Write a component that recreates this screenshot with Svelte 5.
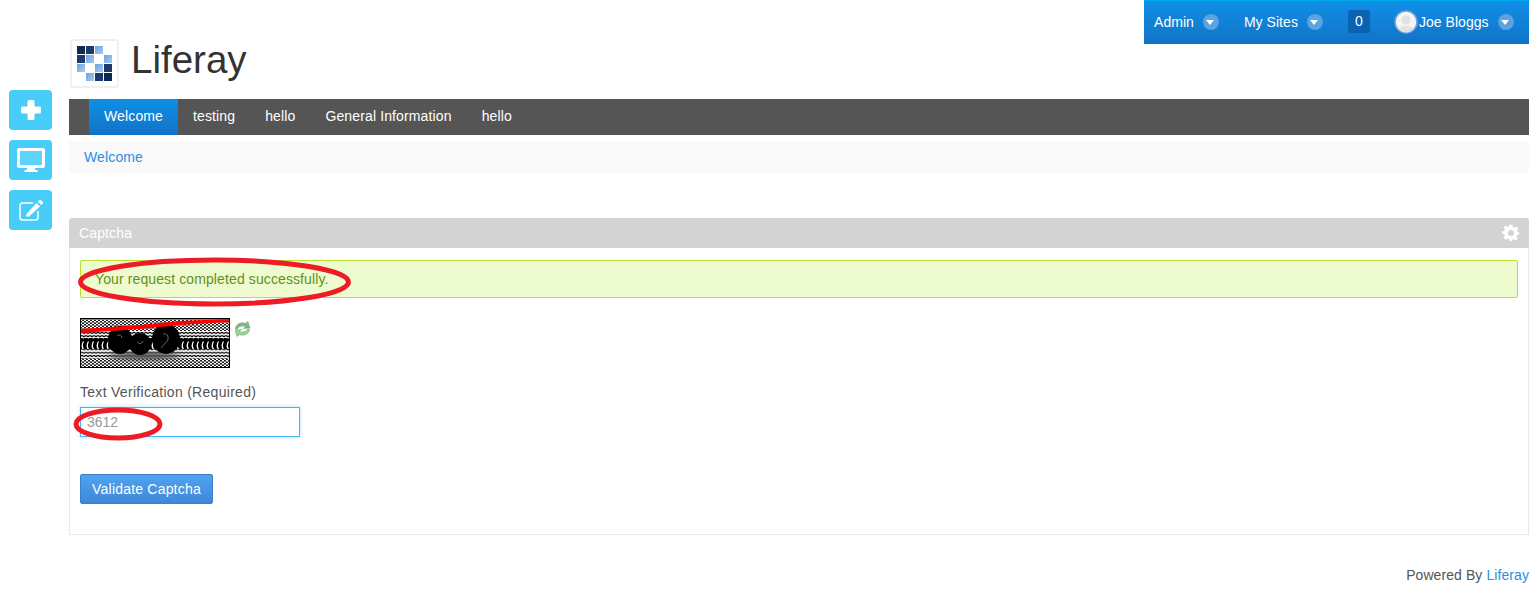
<script>
	const navItems = [
		{ label: 'Welcome', active: true },
		{ label: 'testing' },
		{ label: 'hello' },
		{ label: 'General Information' },
		{ label: 'hello' }
	];
	const light = 'linear-gradient(135deg,#6aa5de,#a9cbee)';
	const logoCells = [
		['#0c2a52', '#1c3a6e', light, null],
		['#1c3a6e', light, null, light],
		[light, null, light, '#1c3a6e'],
		[null, light, '#1c3a6e', '#0c2a52']
	];
</script>

<div class="page">
	<div class="dockbar">
		<span class="dock-item">Admin <i class="caret"></i></span>
		<span class="dock-item sites">My Sites <i class="caret"></i></span>
		<span class="badge">0</span>
		<span class="dock-item user">
			<svg class="avatar" viewBox="0 0 24 24" width="24" height="24">
				<circle cx="12" cy="12" r="11" fill="#f4f4f4" stroke="#6f9fe0" stroke-width="1.5" />
				<circle cx="12" cy="10" r="4.5" fill="#e2e2e2" />
				<path d="M4.5 19c2-4 13-4 15 0a10 10 0 0 1-15 0z" fill="#e2e2e2" />
			</svg><span>Joe Bloggs</span><i class="caret last"></i>
		</span>
	</div>

	<aside class="side">
		<button class="side-btn" aria-label="Add">
			<svg viewBox="0 0 24 24" width="24" height="24"><path d="M8.500 3.500a1.500 1.500 0 0 1 1.500-1.500h4a1.500 1.500 0 0 1 1.500 1.500v5h5a1.500 1.500 0 0 1 1.500 1.500v4a1.500 1.500 0 0 1-1.500 1.500h-5v5a1.500 1.500 0 0 1-1.500 1.500h-4a1.500 1.500 0 0 1-1.500-1.500v-5h-5A1.500 1.500 0 0 1 2 14v-4a1.500 1.500 0 0 1 1.500-1.500h5z" fill="#fff" /></svg>
		</button>
		<button class="side-btn" aria-label="Preview">
			<svg viewBox="0 0 28 24" width="28" height="24"><path fill="#fff" fill-rule="evenodd" d="M2 0h24a2 2 0 0 1 2 2v16a2 2 0 0 1-2 2H18v2h2.500v2h-13v-2H10v-2H2a2 2 0 0 1-2-2V2a2 2 0 0 1 2-2zm1 3v14h22V3z" /><rect x="3" y="3" width="22" height="14" fill="#fff" opacity="0.12" /></svg>
		</button>
		<button class="side-btn" aria-label="Edit">
			<svg viewBox="0 0 26 24" width="26" height="24">
				<path d="M20 13v6.500a2.500 2.500 0 0 1-2.500 2.500h-13A2.500 2.500 0 0 1 2 19.500v-12A2.500 2.500 0 0 1 4.500 5H15" fill="none" stroke="#fff" stroke-width="1.500" />
				<path d="M8.500 16 18.500 5l3.500 3.500L11 18.500H8z" fill="#fff" />
				<path d="M19.700 3.700l1.800-1.800a1 1 0 0 1 1.400 0l2 2a1 1 0 0 1 0 1.400l-1.700 1.800z" fill="#fff" />
			</svg>
		</button>
	</aside>

	<main class="main">
		<header class="brand">
			<div class="logo">
				<div class="logo-grid">
					{#each logoCells.flat() as cell}
						<span style="background:{cell ?? 'transparent'}"></span>
					{/each}
				</div>
			</div>
			<h1>Liferay</h1>
		</header>

		<nav class="nav">
			{#each navItems as item}
				<a class:active={item.active} href="#top">{item.label}</a>
			{/each}
		</nav>

		<div class="crumbs"><a href="#top">Welcome</a></div>

		<section class="portlet">
			<div class="portlet-title">
				<span>Captcha</span>
				<svg viewBox="0 0 24 24" width="18" height="18">
					<path fill="#fff" fill-rule="evenodd" d="M10 1h4l.6 3.200 1.900.8 2.700-1.800 2.800 2.800-1.800 2.700.8 1.900L23 11v3l-3 .6-.8 1.900 1.800 2.700-2.800 2.800-2.700-1.800-1.900.8L13.500 23h-3l-.6-2.800-1.900-.8-2.700 1.800L2 18.400l1.800-2.700-.8-1.900L0 13v-3l3.200-.6.800-1.900-1.800-2.700L5 2l2.700 1.800 1.900-.8zM12 8a4 4 0 1 0 0 8 4 4 0 0 0 0-8z" />
				</svg>
			</div>
			<div class="portlet-body">
				<div class="alert">Your request completed successfully.</div>

				<div class="captcha-row">
					<svg class="captcha" viewBox="0 0 150 50" width="150" height="50">
						<defs>
							<pattern id="dots" width="4" height="3" patternUnits="userSpaceOnUse">
								<rect width="4" height="3" fill="#fff" />
								<circle cx="1" cy="0.750" r="0.950" fill="#000" />
								<circle cx="3" cy="2.250" r="0.950" fill="#000" />
							</pattern>
							<pattern id="arcs" width="5" height="11" patternUnits="userSpaceOnUse">
								<rect width="5" height="11" fill="#000" />
								<path d="M3.500 1.500Q1 5.500 3.500 9.500" fill="none" stroke="#fff" stroke-width="1.300" />
							</pattern>
							<pattern id="waves" width="4" height="3.300" patternUnits="userSpaceOnUse">
								<rect width="4" height="3.300" fill="#fff" />
								<path d="M0 2.500Q2 0 4 2.500" fill="none" stroke="#000" stroke-width="1.200" />
							</pattern>
							<filter id="soft"><feGaussianBlur stdDeviation="2.500" /></filter>
						</defs>
						<rect width="150" height="50" fill="url(#dots)" />
						<rect y="13" width="150" height="7" fill="url(#waves)" />
						<rect y="20" width="150" height="11" fill="url(#arcs)" />
						<rect y="31" width="150" height="10" fill="url(#waves)" />
						<ellipse cx="64" cy="38" rx="36" ry="4" fill="#555" filter="url(#soft)" />
						<g fill="#000">
							<ellipse cx="40" cy="22" rx="12" ry="14" />
							<ellipse cx="60" cy="26" rx="11" ry="11" />
							<ellipse cx="86" cy="21" rx="14" ry="15" />
						</g>
						<g fill="none" stroke="#666" stroke-width="1">
							<path d="M37 18q4-3 5 2M57 24q4 4 6-1M83 16q6-1 5 6l-7 8" />
						</g>
						<path d="M1 11 60 7 100 3 149 1V4L100 7 60 11 1 15z" fill="#f00" />
						<rect x="0.500" y="0.500" width="149" height="49" fill="none" stroke="#000" />
					</svg>
					<svg class="refresh" viewBox="0 0 16 16" width="17" height="16">
						<path d="M.8 8C1.200 3.500 6 .5 11 2.300L13.500.5 15.500 7 9 7.500 11 5.600C8 4.300 4.500 5 2.800 8z" fill="#7dbb7d" stroke="#5c9c5c" stroke-width="0.400" />
						<path d="M.8 8C1.200 3.500 6 .5 11 2.300L13.500.5 15.500 7 9 7.500 11 5.600C8 4.300 4.500 5 2.800 8z" transform="rotate(180 8 8)" fill="#9ccf9c" stroke="#5c9c5c" stroke-width="0.400" />
					</svg>
				</div>

				<label class="field-label" for="verify">Text Verification (Required)</label>
				<input id="verify" class="field" value="3612" />

				<button class="validate">Validate Captcha</button>
			</div>
		</section>

		<footer class="footer">Powered By <a href="#top">Liferay</a></footer>
	</main>

	<!-- hand drawn marks on top of the screenshot -->
	<svg class="marks" viewBox="0 0 1535 597" width="1535" height="597">
		<ellipse cx="214.500" cy="282" rx="134" ry="22" />
		<ellipse cx="118" cy="424" rx="42" ry="14" />
	</svg>
</div>

<style>
	:global(body) {
		margin: 0;
		background: #fff;
		font-family: "Liberation Sans", Arial, sans-serif;
		font-size: 14px;
		letter-spacing: 0.13px;
		color: #555;
	}

	.page {
		position: relative;
		height: 597px;
		overflow: hidden;
	}

	.dockbar {
		position: absolute;
		top: 0;
		left: 1144px;
		width: 385px;
		height: 44px;
		box-sizing: border-box;
		padding: 0 0 2px 10px;
		display: flex;
		align-items: center;
		color: #fff;
		letter-spacing: 0.05px;
		background: linear-gradient(#0f8fe6, #1273c6);
		border-top: 1px solid #00aeef;
	}

	.dock-item {
		display: flex;
		align-items: center;
		white-space: pre;
	}

	.sites {
		margin-left: 25px;
	}

	.user {
		margin-left: 24px;
	}

	.avatar {
		margin-right: 1px;
	}

	.caret {
		display: inline-block;
		width: 16px;
		height: 16px;
		margin-left: 5px;
		border-radius: 50%;
		background: #5aa3e2;
		position: relative;
	}

	.caret.last {
		margin-left: 9px;
	}

	.caret::after {
		content: "";
		position: absolute;
		left: 3.500px;
		top: 6px;
		border: 4.500px solid transparent;
		border-top: 5px solid #fff;
		border-bottom: 0;
	}

	.badge {
		width: 22px;
		height: 23px;
		line-height: 23px;
		margin-left: 25px;
		text-align: center;
		border-radius: 3px;
		background: #0a62b0;
	}

	.side {
		position: absolute;
		top: 90px;
		left: 9px;
		display: flex;
		flex-direction: column;
		gap: 10px;
	}

	.side-btn {
		width: 43px;
		height: 40px;
		padding: 0;
		border: 0;
		border-radius: 4px;
		background: #48cdf9;
		display: flex;
		align-items: center;
		justify-content: center;
	}

	.main {
		margin: 0 6px 0 69px;
		padding-top: 39px;
	}

	.brand {
		display: flex;
		align-items: center;
		height: 49px;
		padding-left: 1px;
		margin-bottom: 11px;
	}

	.logo {
		width: 49px;
		height: 49px;
		box-sizing: border-box;
		border: 2px solid #f0f0f0;
		border-radius: 3px;
		display: flex;
		align-items: center;
		justify-content: center;
	}

	.logo-grid {
		display: grid;
		grid-template-columns: repeat(4, 8px);
		grid-auto-rows: 8px;
		gap: 1px;
	}

	h1 {
		margin: 0 0 8px 12px;
		font-size: 38.500px;
		font-weight: 400;
		letter-spacing: 0;
		color: #333;
		line-height: 42px;
	}

	.nav {
		display: flex;
		height: 36px;
		padding-left: 20px;
		background: #555;
	}

	.nav a {
		padding: 0 15px;
		line-height: 34px;
		color: #fff;
		text-decoration: none;
	}

	.nav a.active {
		background: linear-gradient(#0f8fe6, #1273c6);
	}

	.crumbs {
		height: 32px;
		margin-top: 6px;
		padding-left: 15px;
		line-height: 32px;
		background: #f9f9f9;
		border-radius: 4px;
	}

	a {
		color: #2a8fe0;
		text-decoration: none;
	}

	.portlet {
		margin-top: 45px;
	}

	.portlet-title {
		height: 30px;
		padding: 0 9px 0 10px;
		display: flex;
		align-items: center;
		justify-content: space-between;
		color: #fff;
		background: #d3d3d3;
		border-radius: 3px 3px 0 0;
	}

	.portlet-body {
		height: 287px;
		box-sizing: border-box;
		padding: 12px 10px 0;
		border: 1px solid #e8e8e8;
		border-top: 0;
	}

	.alert {
		height: 38px;
		box-sizing: border-box;
		padding-left: 14px;
		line-height: 36px;
		letter-spacing: 0.11px;
		color: #658f22;
		background: #eefbcf;
		border: 1px solid #b8e02c;
		border-radius: 2px;
	}

	.captcha-row {
		display: flex;
		align-items: flex-start;
		margin-top: 20px;
	}

	.captcha {
		display: block;
	}

	.refresh {
		margin: 3px 0 0 4px;
	}

	.field-label {
		display: block;
		margin-top: 14px;
		line-height: 20px;
		letter-spacing: 0.29px;
	}

	.field {
		display: block;
		width: 220px;
		height: 30px;
		box-sizing: border-box;
		margin-top: 5px;
		padding: 0 6px;
		font: inherit;
		color: #999;
		border: 1px solid #46b4f2;
		box-shadow: 0 0 4px rgba(70, 180, 242, 0.45);
		outline: none;
	}

	.validate {
		display: block;
		width: 133px;
		height: 30px;
		margin-top: 37px;
		padding: 0;
		font: inherit;
		letter-spacing: 0.2px;
		color: #fff;
		background: linear-gradient(#50a2f0, #3f88d8);
		border: 1px solid #3a80c8;
		border-radius: 2px;
	}

	.footer {
		margin-top: 32px;
		text-align: right;
		line-height: 16px;
		letter-spacing: 0.08px;
	}

	.marks {
		position: absolute;
		top: 0;
		left: 0;
		pointer-events: none;
	}

	.marks ellipse {
		fill: none;
		stroke: #ed1c24;
		stroke-width: 5;
	}
</style>
